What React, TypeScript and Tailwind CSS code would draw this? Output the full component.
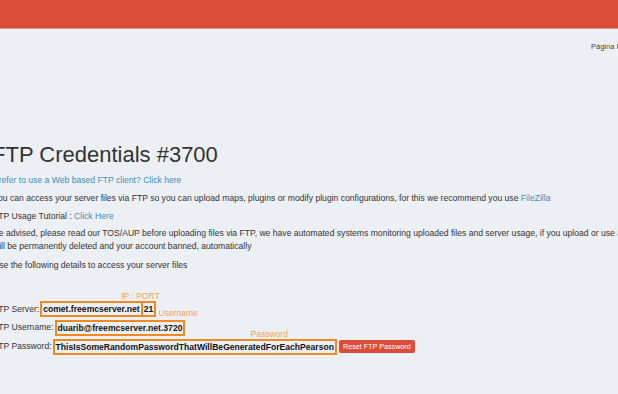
export default function App() {
  return (
    <div className="w-[618px] h-[394px] overflow-hidden bg-[#ecf0f5] font-['Liberation_Sans',Arial,sans-serif] text-[#333]">
      <div className="h-[29px] bg-[#dd4b39] border-b border-[#f0907f]" />
      <div className="w-[700px] -ml-[7px]">
        <div className="flex pt-[12px] pl-[598px] text-[7.5px] text-[#444] whitespace-nowrap">
          Página Inicial &gt; FTP
        </div>
        <h1 className="mt-[89px] -ml-[1px] text-[22px] leading-[28px] whitespace-nowrap">FTP Credentials #3700</h1>
        <div className="mt-[5px] flex flex-col text-[8.6px] leading-[13px] whitespace-nowrap">
          <a className="text-[#3c8dbc]">Prefer to use a Web based FTP client? Click here</a>
          <p className="mt-[5px]">
            You can access your server files via FTP so you can upload maps, plugins or modify plugin configurations, for this we recommend you use{" "}
            <a className="text-[#3c8dbc]">FileZilla</a>
          </p>
          <p className="mt-[5px]">
            FTP Usage Tutorial : <a className="text-[#3c8dbc]">Click Here</a>
          </p>
          <p className="mt-[4px]">
            Be advised, please read our TOS/AUP before uploading files via FTP, we have automated systems monitoring uploaded files and server usage, if you upload or use any illegal files they
            <br />
            will be permanently deleted and your account banned, automatically
          </p>
          <p className="mt-[6px]">Use the following details to access your server files</p>

          <div className="mt-[28px] flex flex-col">
            <div className="flex items-center h-[18px]">
              <span>FTP Server:</span>
              <span className="relative ml-[1px] flex">
                <b className="border-2 border-[#f08a1c] px-[1px] leading-[12px] text-[#111]">comet.freemcserver.net</b>
                <b className="border-2 border-l-0 border-[#f08a1c] px-[1px] leading-[12px] text-[#111]">21</b>
                <span className="absolute left-[81px] -top-[11px] text-[8.5px] font-normal text-[#f4a354]">IP : PORT</span>
              </span>
            </div>
            <div className="flex items-center h-[19px]">
              <span>FTP Username:</span>
              <span className="relative ml-[1px] flex">
                <b className="border-2 border-[#f08a1c] px-[1px] leading-[12px] text-[#111]">duarib@freemcserver.net.3720</b>
                <span className="absolute left-[104px] -top-[13px] text-[8.5px] text-[#f4a354]">Username</span>
              </span>
            </div>
            <div className="flex items-center h-[19px]">
              <span>FTP Password:</span>
              <span className="relative ml-[1px] flex">
                <b className="border-2 border-[#f08a1c] px-[1px] leading-[12px] text-[#111]">ThisIsSomeRandomPasswordThatWillBeGeneratedForEachPearson</b>
                <span className="absolute left-[198px] -top-[11px] text-[8.5px] text-[#f4a354]">Password</span>
              </span>
              <button className="ml-[2px] h-[13px] px-[4px] rounded-[2px] bg-[#dd4b39] text-white text-[7.2px] leading-[13px]">
                Reset FTP Password
              </button>
            </div>
          </div>
        </div>
      </div>
    </div>
  );
}
